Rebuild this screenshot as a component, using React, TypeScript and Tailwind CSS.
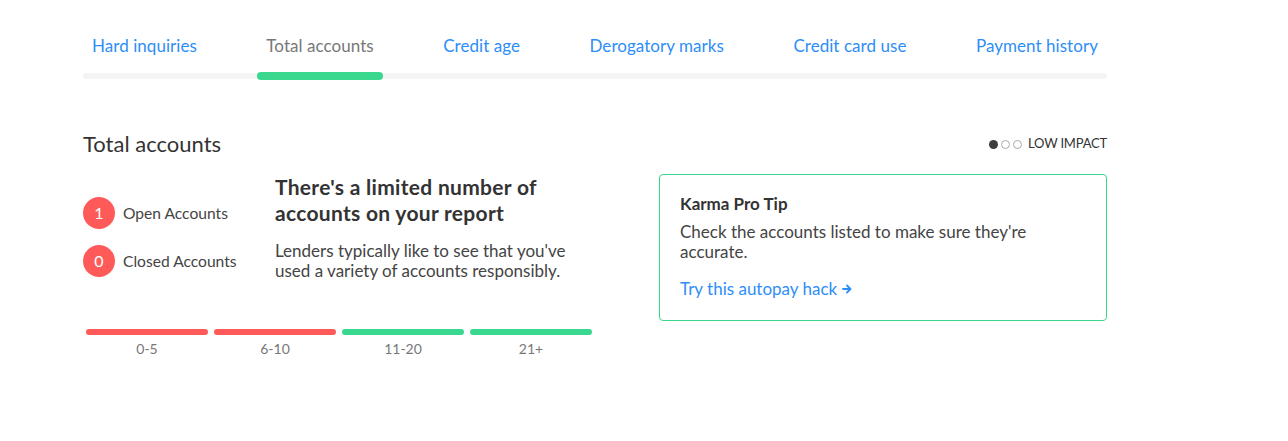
const tabs = [
  'Hard inquiries',
  'Total accounts',
  'Credit age',
  'Derogatory marks',
  'Credit card use',
  'Payment history',
];

const ranges = [
  { label: '0-5', color: 'bg-[#ff5a5a]' },
  { label: '6-10', color: 'bg-[#ff5a5a]' },
  { label: '11-20', color: 'bg-[#3ad88e]' },
  { label: '21+', color: 'bg-[#3ad88e]' },
];

function CountBadge({ count, label }: { count: number; label: string }) {
  return (
    <div className="flex items-center h-8">
      <div className="w-8 h-8 rounded-full bg-[#ff5a5a] text-white flex items-center justify-center text-[16px]">
        {count}
      </div>
      <span className="ml-2 pt-[2px] text-[15.6px] text-[#444]">{label}</span>
    </div>
  );
}

function ImpactDots() {
  return (
    <div className="flex items-center gap-[3px] text-[13px] text-[#333] tracking-[-0.2px]">
      <span className="w-[9px] h-[9px] rounded-full bg-[#3d3d3d]" />
      <span className="w-[9px] h-[9px] rounded-full border border-[#aaa]" />
      <span className="w-[9px] h-[9px] rounded-full border border-[#aaa]" />
      <span className="ml-[3px]">LOW IMPACT</span>
    </div>
  );
}

export default function App() {
  return (
    <div
      className="w-[1288px] h-[441px] bg-white"
      style={{ fontFamily: 'Lato, "Liberation Sans", sans-serif' }}
    >
      <div className="ml-[83px] w-[1024px] pt-[34px]">
        {/* tab strip */}
        <div className="relative flex justify-between">
          <div className="absolute left-0 right-0 bottom-[1px] h-[6px] rounded-full bg-[#f4f4f5]" />
          {tabs.map((tab) => {
            const active = tab === 'Total accounts';
            return (
              <div key={tab} className="relative flex flex-col">
                <span
                  className={`px-[9px] text-[17px] tracking-[0.05px] leading-6 whitespace-nowrap ${
                    active ? 'text-[#777]' : 'text-[#2e8ef7]'
                  }`}
                >
                  {tab}
                </span>
                <div className={`mt-[14px] h-[8px] rounded-full ${active ? 'bg-[#3ad88e]' : ''}`} />
              </div>
            );
          })}
        </div>

        <div className="mt-[50px] flex items-center justify-between">
          <h2 className="text-[22px] leading-7 text-[#333]">Total accounts</h2>
          <ImpactDots />
        </div>

        <div className="mt-[16px] flex justify-between">
          <div className="flex flex-col">
            <div className="flex">
              <div className="w-[192px] pt-[23px] flex flex-col gap-4">
                <CountBadge count={1} label="Open Accounts" />
                <CountBadge count={0} label="Closed Accounts" />
              </div>
              <div className="w-[300px]">
                <h3 className="text-[21px] tracking-[0.3px] leading-[26px] font-bold text-[#333]">
                  There's a limited number of accounts on your report
                </h3>
                <p className="mt-[15px] text-[17px] leading-5 text-[#444]">
                  Lenders typically like to see that you've used a variety of accounts responsibly.
                </p>
              </div>
            </div>

            <div className="mt-[48px] ml-[3px] flex gap-[6px]">
              {ranges.map((r) => (
                <div key={r.label} className="w-[122px] flex flex-col items-center">
                  <div className={`w-full h-[6px] rounded-full ${r.color}`} />
                  <span className="mt-[4px] text-[14px] leading-5 text-[#777]">{r.label}</span>
                </div>
              ))}
            </div>
          </div>

          <div className="w-[448px] h-[147px] border border-[#3ad88e] rounded-[4px] px-[20px] pt-[16px]">
            <div className="text-[17px] leading-[26px] font-bold text-[#333]">Karma Pro Tip</div>
            <p className="mt-[5px] text-[17px] leading-5 text-[#444] w-[380px]">
              Check the accounts listed to make sure they're accurate.
            </p>
            <a className="mt-[17px] flex items-center text-[17px] leading-5 text-[#2e8ef7]" href="#">
              Try this autopay hack
              <svg
                className="ml-[5px]"
                width="10"
                height="10"
                viewBox="0 0 10 10"
                fill="none"
                stroke="currentColor"
                strokeWidth="1.8"
                strokeLinecap="round"
                strokeLinejoin="round"
              >
                <path d="M1 5h7.5M5 1.5 8.5 5 5 8.5" />
              </svg>
            </a>
          </div>
        </div>
      </div>
    </div>
  );
}
